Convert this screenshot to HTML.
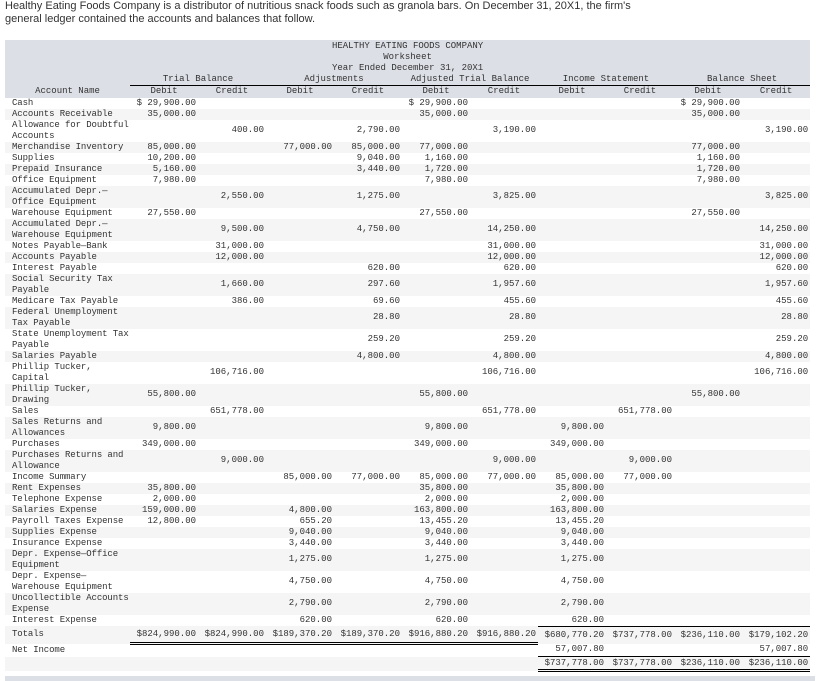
<!DOCTYPE html>
<html><head><meta charset="utf-8"><style>
body{margin:0;background:#fff;width:836px;height:681px;overflow:hidden;font-family:"Liberation Sans",sans-serif;color:#333}
.intro{position:absolute;left:5px;top:0px;font-size:11px;line-height:13px;width:655px}
.wrap{position:absolute;left:5px;top:40px;width:810px;background:#fff}
table{border-collapse:collapse;table-layout:fixed;width:805px;font-family:"Liberation Mono",monospace;font-size:9px;color:#333}
td{padding:0 2px 0 0;line-height:11px;text-align:right;vertical-align:middle;white-space:pre;overflow:visible}
td.n{text-align:left;padding-left:7px;white-space:nowrap;letter-spacing:-0.1px}
thead td{background:#dcdfe6;text-align:center;padding:0}
thead tr.g td.u{border-bottom:1.5px solid #000}
tbody tr:nth-child(even) td{background:#f5f5f5}
tr.tot td{height:16px}
.tl{border-top:1px solid #000}
.db{border-bottom:3px double #000}
.strip{position:absolute;left:5px;top:676px;width:810px;height:5px;background:#dcdfe6}
</style></head><body>
<div class="intro">Healthy Eating Foods Company is a distributor of nutritious snack foods such as granola bars. On December 31, 20X1, the firm's general ledger contained the accounts and balances that follow.</div>
<div class="wrap"><table>
<colgroup><col style="width:125px"><col style="width:68px"><col style="width:68px"><col style="width:68px"><col style="width:68px"><col style="width:68px"><col style="width:68px"><col style="width:68px"><col style="width:68px"><col style="width:68px"><col style="width:68px"></colgroup>
<thead>
<tr><td colspan="11" style="padding-top:1px">HEALTHY EATING FOODS COMPANY</td></tr>
<tr><td colspan="11">Worksheet</td></tr>
<tr><td colspan="11">Year Ended December 31, 20X1</td></tr>
<tr class="g"><td></td><td colspan="2" class="u">Trial Balance</td><td colspan="2" class="u">Adjustments</td><td colspan="2" class="u">Adjusted Trial Balance</td><td colspan="2" class="u">Income Statement</td><td colspan="2" class="u">Balance Sheet</td></tr>
<tr><td style="padding-bottom:1px">Account Name</td><td>Debit</td><td>Credit</td><td>Debit</td><td>Credit</td><td>Debit</td><td>Credit</td><td>Debit</td><td>Credit</td><td>Debit</td><td>Credit</td></tr>
</thead>
<tbody>
<tr><td class="n">Cash</td><td>$ 29,900.00</td><td></td><td></td><td></td><td>$ 29,900.00</td><td></td><td></td><td></td><td>$ 29,900.00</td><td></td></tr>
<tr><td class="n">Accounts Receivable</td><td>35,000.00</td><td></td><td></td><td></td><td>35,000.00</td><td></td><td></td><td></td><td>35,000.00</td><td></td></tr>
<tr><td class="n">Allowance for Doubtful<br>Accounts</td><td></td><td>400.00</td><td></td><td>2,790.00</td><td></td><td>3,190.00</td><td></td><td></td><td></td><td>3,190.00</td></tr>
<tr><td class="n">Merchandise Inventory</td><td>85,000.00</td><td></td><td>77,000.00</td><td>85,000.00</td><td>77,000.00</td><td></td><td></td><td></td><td>77,000.00</td><td></td></tr>
<tr><td class="n">Supplies</td><td>10,200.00</td><td></td><td></td><td>9,040.00</td><td>1,160.00</td><td></td><td></td><td></td><td>1,160.00</td><td></td></tr>
<tr><td class="n">Prepaid Insurance</td><td>5,160.00</td><td></td><td></td><td>3,440.00</td><td>1,720.00</td><td></td><td></td><td></td><td>1,720.00</td><td></td></tr>
<tr><td class="n">Office Equipment</td><td>7,980.00</td><td></td><td></td><td></td><td>7,980.00</td><td></td><td></td><td></td><td>7,980.00</td><td></td></tr>
<tr><td class="n">Accumulated Depr.—<br>Office Equipment</td><td></td><td>2,550.00</td><td></td><td>1,275.00</td><td></td><td>3,825.00</td><td></td><td></td><td></td><td>3,825.00</td></tr>
<tr><td class="n">Warehouse Equipment</td><td>27,550.00</td><td></td><td></td><td></td><td>27,550.00</td><td></td><td></td><td></td><td>27,550.00</td><td></td></tr>
<tr><td class="n">Accumulated Depr.—<br>Warehouse Equipment</td><td></td><td>9,500.00</td><td></td><td>4,750.00</td><td></td><td>14,250.00</td><td></td><td></td><td></td><td>14,250.00</td></tr>
<tr><td class="n">Notes Payable—Bank</td><td></td><td>31,000.00</td><td></td><td></td><td></td><td>31,000.00</td><td></td><td></td><td></td><td>31,000.00</td></tr>
<tr><td class="n">Accounts Payable</td><td></td><td>12,000.00</td><td></td><td></td><td></td><td>12,000.00</td><td></td><td></td><td></td><td>12,000.00</td></tr>
<tr><td class="n">Interest Payable</td><td></td><td></td><td></td><td>620.00</td><td></td><td>620.00</td><td></td><td></td><td></td><td>620.00</td></tr>
<tr><td class="n">Social Security Tax<br>Payable</td><td></td><td>1,660.00</td><td></td><td>297.60</td><td></td><td>1,957.60</td><td></td><td></td><td></td><td>1,957.60</td></tr>
<tr><td class="n">Medicare Tax Payable</td><td></td><td>386.00</td><td></td><td>69.60</td><td></td><td>455.60</td><td></td><td></td><td></td><td>455.60</td></tr>
<tr><td class="n">Federal Unemployment<br>Tax Payable</td><td></td><td></td><td></td><td>28.80</td><td></td><td>28.80</td><td></td><td></td><td></td><td>28.80</td></tr>
<tr><td class="n">State Unemployment Tax<br>Payable</td><td></td><td></td><td></td><td>259.20</td><td></td><td>259.20</td><td></td><td></td><td></td><td>259.20</td></tr>
<tr><td class="n">Salaries Payable</td><td></td><td></td><td></td><td>4,800.00</td><td></td><td>4,800.00</td><td></td><td></td><td></td><td>4,800.00</td></tr>
<tr><td class="n">Phillip Tucker,<br>Capital</td><td></td><td>106,716.00</td><td></td><td></td><td></td><td>106,716.00</td><td></td><td></td><td></td><td>106,716.00</td></tr>
<tr><td class="n">Phillip Tucker,<br>Drawing</td><td>55,800.00</td><td></td><td></td><td></td><td>55,800.00</td><td></td><td></td><td></td><td>55,800.00</td><td></td></tr>
<tr><td class="n">Sales</td><td></td><td>651,778.00</td><td></td><td></td><td></td><td>651,778.00</td><td></td><td>651,778.00</td><td></td><td></td></tr>
<tr><td class="n">Sales Returns and<br>Allowances</td><td>9,800.00</td><td></td><td></td><td></td><td>9,800.00</td><td></td><td>9,800.00</td><td></td><td></td><td></td></tr>
<tr><td class="n">Purchases</td><td>349,000.00</td><td></td><td></td><td></td><td>349,000.00</td><td></td><td>349,000.00</td><td></td><td></td><td></td></tr>
<tr><td class="n">Purchases Returns and<br>Allowance</td><td></td><td>9,000.00</td><td></td><td></td><td></td><td>9,000.00</td><td></td><td>9,000.00</td><td></td><td></td></tr>
<tr><td class="n">Income Summary</td><td></td><td></td><td>85,000.00</td><td>77,000.00</td><td>85,000.00</td><td>77,000.00</td><td>85,000.00</td><td>77,000.00</td><td></td><td></td></tr>
<tr><td class="n">Rent Expenses</td><td>35,800.00</td><td></td><td></td><td></td><td>35,800.00</td><td></td><td>35,800.00</td><td></td><td></td><td></td></tr>
<tr><td class="n">Telephone Expense</td><td>2,000.00</td><td></td><td></td><td></td><td>2,000.00</td><td></td><td>2,000.00</td><td></td><td></td><td></td></tr>
<tr><td class="n">Salaries Expense</td><td>159,000.00</td><td></td><td>4,800.00</td><td></td><td>163,800.00</td><td></td><td>163,800.00</td><td></td><td></td><td></td></tr>
<tr><td class="n">Payroll Taxes Expense</td><td>12,800.00</td><td></td><td>655.20</td><td></td><td>13,455.20</td><td></td><td>13,455.20</td><td></td><td></td><td></td></tr>
<tr><td class="n">Supplies Expense</td><td></td><td></td><td>9,040.00</td><td></td><td>9,040.00</td><td></td><td>9,040.00</td><td></td><td></td><td></td></tr>
<tr><td class="n">Insurance Expense</td><td></td><td></td><td>3,440.00</td><td></td><td>3,440.00</td><td></td><td>3,440.00</td><td></td><td></td><td></td></tr>
<tr><td class="n">Depr. Expense—Office<br>Equipment</td><td></td><td></td><td>1,275.00</td><td></td><td>1,275.00</td><td></td><td>1,275.00</td><td></td><td></td><td></td></tr>
<tr><td class="n">Depr. Expense—<br>Warehouse Equipment</td><td></td><td></td><td>4,750.00</td><td></td><td>4,750.00</td><td></td><td>4,750.00</td><td></td><td></td><td></td></tr>
<tr><td class="n">Uncollectible Accounts<br>Expense</td><td></td><td></td><td>2,790.00</td><td></td><td>2,790.00</td><td></td><td>2,790.00</td><td></td><td></td><td></td></tr>
<tr><td class="n">Interest Expense</td><td></td><td></td><td>620.00</td><td></td><td>620.00</td><td></td><td>620.00</td><td></td><td></td><td></td></tr>
<tr class="tot"><td class="n">Totals</td><td class="db">$824,990.00</td><td class="db">$824,990.00</td><td class="db">$189,370.20</td><td class="db">$189,370.20</td><td class="db">$916,880.20</td><td class="db">$916,880.20</td><td class="tl">$680,770.20</td><td class="tl">$737,778.00</td><td class="tl">$236,110.00</td><td class="tl">$179,102.20</td></tr>
<tr style="height:13px"><td class="n">Net Income</td><td></td><td></td><td></td><td></td><td></td><td></td><td style="border-bottom:1px solid #000">57,007.80</td><td style="border-bottom:1px solid #000"></td><td style="border-bottom:1px solid #000"></td><td style="border-bottom:1px solid #000">57,007.80</td></tr>
<tr style="height:14px"><td></td><td></td><td></td><td></td><td></td><td></td><td></td><td class="db">$737,778.00</td><td class="db">$737,778.00</td><td class="db">$236,110.00</td><td class="db">$236,110.00</td></tr>
</tbody></table></div>
<div class="strip"></div>
</body></html>
